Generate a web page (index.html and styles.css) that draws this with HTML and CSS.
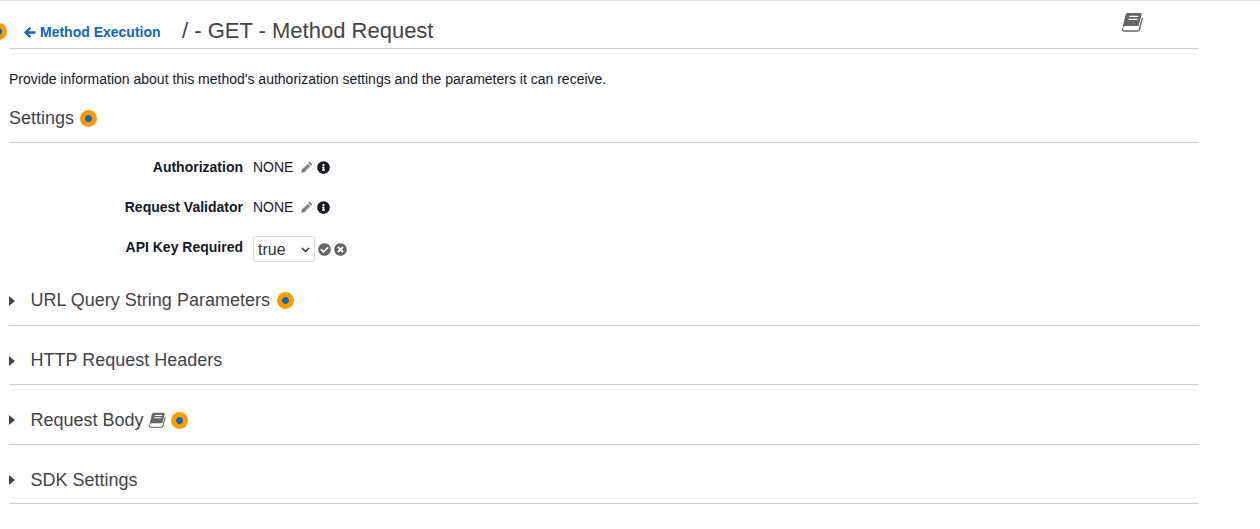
FILE: index.html
```html
<!DOCTYPE html>
<html lang="en">
<head>
<meta charset="utf-8">
<title>Method Request</title>
<link rel="stylesheet" href="styles.css">
</head>
<body>
<svg class="defs" aria-hidden="true">
  <symbol id="i-book" viewBox="0 0 22 20">
    <path d="M6.500 1H19.500Q21 1 20.600 2.500L17.600 14H4.500Q2.500 14 1.500 16L4.500 3Q5 1 6.500 1z" fill="currentColor"/>
    <path d="M1.500 16Q1 19 4 19H16.500Q18 19 18.400 17.500L21.400 6" stroke="currentColor" stroke-width="1.300" fill="none"/>
    <path d="M8.300 4.300h9M7.500 7.300h9" stroke="#fff" stroke-width="1.300" fill="none"/>
  </symbol>
  <symbol id="i-info" viewBox="0 0 512 512"><path d="M256 8C119.043 8 8 119.083 8 256c0 136.997 111.043 248 248 248s248-111.003 248-248C504 119.083 392.957 8 256 8zm0 110c23.196 0 42 18.804 42 42s-18.804 42-42 42-42-18.804-42-42 18.804-42 42-42zm56 254c0 6.627-5.373 12-12 12h-88c-6.627 0-12-5.373-12-12v-24c0-6.627 5.373-12 12-12h12v-64h-12c-6.627 0-12-5.373-12-12v-24c0-6.627 5.373-12 12-12h64c6.627 0 12 5.373 12 12v100h12c6.627 0 12 5.373 12 12v24z" fill="currentColor"/></symbol>
  <symbol id="i-pencil" viewBox="0 0 12 12"><path d="M8.600 .6l2.800 2.800-1.300 1.300-2.800-2.800zM6.600 2.600l2.800 2.800-5.600 5.600-3.500.8.700-3.600z" fill="currentColor"/><path d="M2.200 7.900l5.300-5.300M3.900 9.700l5-5" stroke="#fff" stroke-width=".5" fill="none"/></symbol>
  <symbol id="i-check" viewBox="0 0 512 512"><path d="M504 256c0 136.967-111.033 248-248 248S8 392.967 8 256 119.033 8 256 8s248 111.033 248 248zM227.314 387.314l184-184c6.248-6.248 6.248-16.379 0-22.627l-22.627-22.627c-6.248-6.249-16.379-6.249-22.628 0L216 308.118l-70.059-70.059c-6.248-6.248-16.379-6.248-22.628 0l-22.627 22.627c-6.248 6.248-6.248 16.379 0 22.627l104 104c6.249 6.249 16.379 6.249 22.628.001z" fill="currentColor"/></symbol>
  <symbol id="i-times" viewBox="0 0 512 512"><path d="M256 8C119 8 8 119 8 256s111 248 248 248 248-111 248-248S393 8 256 8zm121.600 313.100c4.700 4.700 4.700 12.300 0 17L338 377.600c-4.700 4.700-12.300 4.700-17 0L256 312l-65.100 65.600c-4.700 4.700-12.300 4.700-17 0L134.400 338c-4.700-4.700-4.700-12.300 0-17l65.600-65-65.600-65.100c-4.700-4.700-4.700-12.300 0-17l39.600-39.600c4.700-4.700 12.300-4.700 17 0l65 65.700 65.100-65.600c4.700-4.700 12.300-4.700 17 0l39.600 39.600c4.700 4.700 4.700 12.300 0 17L312 256l65.600 65.100z" fill="currentColor"/></symbol>
  <symbol id="i-back" viewBox="0 0 13 13"><path d="M6.800 1.500L1.800 6.500l5 5M2.500 6.500H12.500" stroke="currentColor" stroke-width="2.600" fill="none"/></symbol>
</svg>
<main class="page">
  <header class="title-bar">
    <span class="dot dot-cut"></span>
    <a class="back" href="#"><svg class="back-icon"><use href="#i-back"/></svg>Method Execution</a>
    <h1 class="title">/ - GET - Method Request</h1>
    <svg class="book book-top"><use href="#i-book"/></svg>
  </header>
  <p class="intro">Provide information about this method's authorization settings and the parameters it can receive.</p>
  <section class="settings">
    <h2 class="settings-head">Settings <span class="dot"></span></h2>
    <div class="fields">
      <div class="field">
        <span class="label">Authorization</span>
        <span class="value">NONE</span>
        <svg class="ic ic-pencil"><use href="#i-pencil"/></svg>
        <svg class="ic ic-info"><use href="#i-info"/></svg>
      </div>
      <div class="field">
        <span class="label">Request Validator</span>
        <span class="value">NONE</span>
        <svg class="ic ic-pencil"><use href="#i-pencil"/></svg>
        <svg class="ic ic-info"><use href="#i-info"/></svg>
      </div>
      <div class="field field-select">
        <span class="label">API Key Required</span>
        <select class="select"><option>true</option><option>false</option></select>
        <svg class="ic ic-act"><use href="#i-check"/></svg>
        <svg class="ic ic-act"><use href="#i-times"/></svg>
      </div>
    </div>
  </section>
  <section class="fold">
    <span class="caret"></span><h2 class="fold-head">URL Query String Parameters</h2><span class="dot"></span>
  </section>
  <section class="fold">
    <span class="caret"></span><h2 class="fold-head">HTTP Request Headers</h2>
  </section>
  <section class="fold">
    <span class="caret"></span><h2 class="fold-head">Request Body</h2><svg class="book book-small"><use href="#i-book"/></svg><span class="dot"></span>
  </section>
  <section class="fold">
    <span class="caret"></span><h2 class="fold-head">SDK Settings</h2>
  </section>
</main>
</body>
</html>
```
FILE: styles.css
```css
* { box-sizing: border-box; }
html, body { margin: 0; padding: 0; }
body {
  height: 529px;
  overflow: hidden;
  background: #fff;
  border-top: 1px solid #ddd;
  font-family: "Liberation Sans", Arial, sans-serif;
  color: #16191f;
}
.defs { display: none; }
.page { width: 1199px; padding-left: 9px; }

.dot {
  display: inline-block;
  flex: none;
  width: 17px;
  height: 17px;
  border-radius: 50%;
  background: radial-gradient(circle, #1166bb 0 3px, #ff9900 3.800px);
}

.title-bar {
  display: flex;
  align-items: center;
  height: 48px;
  padding-top: 13px;
  border-bottom: 1px solid #ccc;
}
.dot-cut { margin-left: -19px; margin-right: 17px; }
.back {
  display: flex;
  align-items: center;
  gap: 4px;
  width: 158px;
  padding-top: 2px;
  font-size: 14px;
  font-weight: 700;
  color: #1166bb;
  text-decoration: none;
}
.back-icon { width: 12px; height: 13px; color: #1166bb; }
.title {
  margin: 0;
  font-size: 22px;
  font-weight: 400;
  color: #444;
}
.book { color: #666; }
.book-top { width: 22px; height: 20px; margin-left: auto; margin-right: 56px; margin-top: -18px; }

.intro { margin: 21px 0 0; font-size: 14px; line-height: 18px; }

.settings-head {
  display: flex;
  align-items: center;
  gap: 6px;
  height: 43px;
  margin: 12px 0 0;
  padding-bottom: 6px;
  border-bottom: 1px solid #ccc;
  font-size: 18px;
  font-weight: 400;
  color: #444;
}
.fields { padding-top: 4px; }
.field { display: flex; align-items: center; height: 40px; font-size: 14px; }
.label { width: 234px; margin-right: 10px; text-align: right; font-weight: 700; }
.value { margin-right: 7px; }
.ic { flex: none; width: 12px; height: 12px; }
.ic-pencil { color: #777; margin-left: 1px; }
.ic-info { color: #16191f; width: 13px; height: 13px; margin-left: 3.500px; }
.field-select { height: 26px; margin-top: 9px; align-items: flex-start; }
.field-select .label { line-height: 20px; margin-top: 1px; }
.select {
  appearance: none;
  width: 62px;
  height: 26px;
  margin: 0 3px 0 0;
  padding: 1px 0 0 4px;
  border: 1px solid #ddd;
  border-radius: 3px;
  background: #fff url("data:image/svg+xml,%3Csvg xmlns='http://www.w3.org/2000/svg' width='9' height='6'%3E%3Cpath d='M1 1l3.500 3.500L8 1' stroke='%23333' stroke-width='1.500' fill='none'/%3E%3C/svg%3E") no-repeat 47px 10px;
  font: 16px "Liberation Sans", Arial, sans-serif;
  color: #333;
}
.ic-act { color: #666; margin: 7px 3px 0 0; width: 13px; height: 13px; }

.fold {
  display: flex;
  align-items: center;
  height: 59.500px;
  border-bottom: 1px solid #ccc;
  padding-top: 11px;
}
.settings + .fold { margin-top: 4.900px; height: 59px; padding-top: 10px; }
.fold:last-child { padding-top: 12px; }
.caret {
  width: 0;
  height: 0;
  margin-right: 15.500px;
  border-left: 6px solid #444;
  border-top: 5.500px solid transparent;
  border-bottom: 5.500px solid transparent;
}
.fold-head { margin: 0; font-size: 18px; font-weight: 400; color: #444; }
.fold > .dot { margin-left: 7px; }
.book-small { width: 18px; height: 16px; margin-left: 4.500px; }
.book-small + .dot { margin-left: 4.500px !important; }
```
